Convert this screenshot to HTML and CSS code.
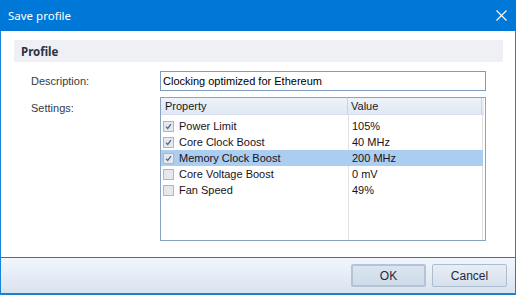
FILE: index.html
```html
<!DOCTYPE html>
<html>
<head>
<meta charset="utf-8">
<link rel="stylesheet" href="styles.css">
</head>
<body>
<div class="window">
  <div class="titlebar">
    <span class="title">Save profile</span>
    <svg class="close" width="11" height="11" viewBox="0 0 11 11"><path d="M0.5 0.5 L10.5 10.5 M10.5 0.5 L0.5 10.5" stroke="#fff" stroke-width="1.1" fill="none"/></svg>
  </div>
  <div class="content">
    <div class="section-header">Profile</div>
    <div class="form">
      <div class="label label-desc">Description:</div>
      <div class="textbox">Clocking optimized for Ethereum</div>
      <div class="label label-settings">Settings:</div>
      <div class="listview">
        <div class="lv-header">
          <div class="lv-col lv-col1">Property</div>
          <div class="lv-col lv-col2">Value</div>
        </div>
        <div class="lv-body">
          <div class="lv-row">
            <div class="lv-cell lv-cell1"><svg class="cb" width="11" height="11" viewBox="0 0 11 11"><rect x="0.5" y="0.5" width="10" height="10" fill="#e6e8ec" stroke="#a9b8cc"/><path d="M3 5.6 L4.7 7.4 L8 3.2" stroke="#4f6890" stroke-width="1.3" fill="none"/></svg>Power Limit</div>
            <div class="lv-cell">105%</div>
          </div>
          <div class="lv-row">
            <div class="lv-cell lv-cell1"><svg class="cb" width="11" height="11" viewBox="0 0 11 11"><rect x="0.5" y="0.5" width="10" height="10" fill="#e6e8ec" stroke="#a9b8cc"/><path d="M3 5.6 L4.7 7.4 L8 3.2" stroke="#4f6890" stroke-width="1.3" fill="none"/></svg>Core Clock Boost</div>
            <div class="lv-cell">40 MHz</div>
          </div>
          <div class="lv-row selected">
            <div class="lv-cell lv-cell1"><svg class="cb" width="11" height="11" viewBox="0 0 11 11"><rect x="0.5" y="0.5" width="10" height="10" fill="#e6e8ec" stroke="#a9b8cc"/><path d="M3 5.6 L4.7 7.4 L8 3.2" stroke="#4f6890" stroke-width="1.3" fill="none"/></svg>Memory Clock Boost</div>
            <div class="lv-cell">200 MHz</div>
          </div>
          <div class="lv-row">
            <div class="lv-cell lv-cell1"><svg class="cb" width="11" height="11" viewBox="0 0 11 11"><rect x="0.5" y="0.5" width="10" height="10" fill="#e6e8ec" stroke="#a9b8cc"/></svg>Core Voltage Boost</div>
            <div class="lv-cell">0 mV</div>
          </div>
          <div class="lv-row">
            <div class="lv-cell lv-cell1"><svg class="cb" width="11" height="11" viewBox="0 0 11 11"><rect x="0.5" y="0.5" width="10" height="10" fill="#e6e8ec" stroke="#a9b8cc"/></svg>Fan Speed</div>
            <div class="lv-cell">49%</div>
          </div>
        </div>
      </div>
    </div>
  </div>
  <div class="footer">
    <button class="btn btn-default">OK</button>
    <button class="btn">Cancel</button>
  </div>
</div>
</body>
</html>
```
FILE: styles.css
```css
html, body {
  margin: 0;
  padding: 0;
  background: #ffffff;
}
.window {
  width: 516px;
  height: 295px;
  box-sizing: border-box;
  border: 1px solid #1a82d6;
  border-bottom-width: 2px;
  display: flex;
  flex-direction: column;
  font-family: "Liberation Sans", Arial, sans-serif;
  font-size: 11px;
  color: #1a1a1a;
}
.titlebar {
  height: 30px;
  flex: none;
  background: #0078d7;
  display: flex;
  align-items: center;
  justify-content: space-between;
  padding: 0 9px 0 8px;
  margin: -1px -1px 0 -1px;
  padding-top: 1px;
}
.title {
  font-family: "Noto Sans", sans-serif;
  font-size: 11.5px;
  color: #ffffff;
  padding-bottom: 2px;
}
.close {
  margin-top: -2px;
}
.content {
  flex: 1;
  background: #ffffff;
  padding: 9px 12px 0 13px;
}
.section-header {
  height: 22px;
  background: #eff0f5;
  display: flex;
  align-items: center;
  padding-left: 7px;
  font-family: "Noto Sans", sans-serif;
  font-weight: bold;
  font-size: 11.5px;
  color: #2b3440;
}
.form {
  display: grid;
  grid-template-columns: 146px 326px;
  grid-template-rows: 20px 144px;
  row-gap: 6px;
  margin-top: 9px;
}
.label {
  padding-left: 17px;
  color: #3a3a3a;
}
.label-desc {
  line-height: 20px;
  padding-top: 0;
}
.label-settings {
  padding-top: 5px;
}
.textbox {
  box-sizing: border-box;
  border: 1px solid #7f9bbd;
  height: 20px;
  line-height: 18px;
  padding-left: 2px;
  color: #000;
}
.listview {
  box-sizing: border-box;
  border: 1px solid #8aa3c3;
  height: 144px;
  display: flex;
  flex-direction: column;
}
.lv-header {
  height: 17px;
  flex: none;
  display: flex;
  margin-right: 1px;
  background: linear-gradient(#eef3fa, #dfe8f5);
  border-bottom: 1px solid #d6e0ec;
  box-sizing: border-box;
}
.lv-col {
  line-height: 16px;
  color: #1a1a1a;
}
.lv-col1 {
  width: 187px;
  padding-left: 4px;
  box-sizing: border-box;
  border-right: 1px solid #c8d4e3;
}
.lv-col2 {
  width: 134px;
  padding-left: 3px;
  box-sizing: border-box;
  border-right: 1px solid #c8d4e3;
}
.lv-body {
  flex: 1;
  padding-top: 3px;
  background:
    linear-gradient(to right, transparent 187px, #e2e2e2 187px, #e2e2e2 188px, transparent 188px, transparent 321px, #e2e2e2 321px, #e2e2e2 322px, transparent 322px);
}
.lv-row {
  display: flex;
  height: 16px;
  line-height: 16px;
  width: 322px;
  color: #1c1020;
}
.lv-row.selected {
  background: #aacdf0;
}
.lv-cell1 {
  width: 188px;
  display: flex;
  align-items: center;
  padding-left: 2px;
  box-sizing: border-box;
}
.lv-cell {
  padding-left: 3px;
}
.lv-cell1 {
  padding-left: 2px;
}
.cb {
  margin-right: 5px;
  flex: none;
}
.footer {
  height: 36px;
  flex: none;
  box-sizing: border-box;
  border-top: 1px solid #5f6874;
  background: linear-gradient(#f1f6fd, #d9e3ef);
  display: flex;
  justify-content: flex-end;
  align-items: flex-start;
  gap: 6px;
  padding: 6px 8px 0 0;
}
.btn {
  width: 75px;
  height: 23px;
  box-sizing: border-box;
  border: 1px solid #adbdd0;
  border-radius: 2px;
  background: linear-gradient(#e8eef6, #d6e0ec);
  font-family: "Liberation Sans", Arial, sans-serif;
  font-size: 12px;
  color: #1e2a3a;
  padding: 0;
}
.btn-default {
  border: 2px solid #b4c3d6;
  background: linear-gradient(#dbe5f1, #cfdbe9);
}
```
